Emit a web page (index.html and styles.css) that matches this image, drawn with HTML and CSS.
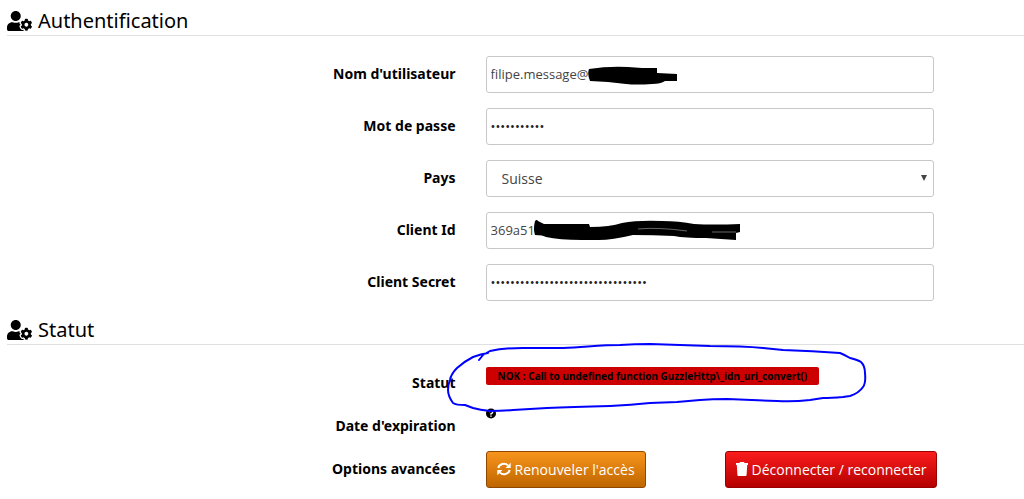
FILE: index.html
```html
<!DOCTYPE html>
<html lang="fr">
<head>
<meta charset="utf-8">
<title>Authentification</title>
<link rel="stylesheet" href="styles.css">
</head>
<body>
<svg class="defs" aria-hidden="true">
  <symbol id="user-cog" viewBox="0 0 640 512"><path d="M610.500 373.300c2.600-14.100 2.600-28.500 0-42.600l25.800-14.900c3-1.700 4.300-5.200 3.300-8.500-6.700-21.600-18.200-41.200-33.200-57.400-2.300-2.500-6-3.100-9-1.400l-25.800 14.900c-10.900-9.300-23.400-16.500-36.900-21.300v-29.800c0-3.400-2.400-6.400-5.700-7.100-22.300-5-45-4.800-66.200 0-3.300.7-5.700 3.700-5.700 7.100v29.800c-13.500 4.800-26 12-36.900 21.300l-25.800-14.900c-2.900-1.700-6.700-1.100-9 1.400-15 16.200-26.500 35.800-33.200 57.400-1 3.300.4 6.800 3.300 8.500l25.800 14.900c-2.600 14.100-2.600 28.500 0 42.600l-25.800 14.900c-3 1.700-4.300 5.200-3.300 8.500 6.700 21.600 18.200 41.100 33.200 57.400 2.300 2.500 6 3.100 9 1.400l25.800-14.900c10.900 9.300 23.400 16.500 36.900 21.300v29.800c0 3.400 2.400 6.400 5.700 7.100 22.300 5 45 4.800 66.200 0 3.300-.7 5.700-3.700 5.700-7.100v-29.800c13.500-4.800 26-12 36.900-21.300l25.800 14.900c2.900 1.700 6.700 1.100 9-1.400 15-16.200 26.500-35.800 33.200-57.400 1-3.300-.4-6.800-3.300-8.500l-25.800-14.900zM496 400.500c-26.800 0-48.500-21.800-48.500-48.500s21.800-48.500 48.500-48.500 48.500 21.800 48.500 48.500-21.700 48.500-48.500 48.500zM224 256c70.700 0 128-57.300 128-128S294.700 0 224 0 96 57.300 96 128s57.300 128 128 128zm201.200 226.500c-2.300-1.200-4.600-2.600-6.800-3.900l-7.900 4.600c-6 3.400-12.800 5.300-19.600 5.300-10.900 0-21.400-4.600-28.900-12.600-18.300-19.800-32.300-43.900-40.200-69.600-5.500-17.700 1.900-36.400 17.900-45.700l7.900-4.600c-.1-2.600-.1-5.200 0-7.800l-7.900-4.600c-16-9.200-23.400-28-17.900-45.700.9-2.900 2.200-5.800 3.200-8.700-3.800-.3-7.500-1.200-11.400-1.200h-16.700c-22.200 10.200-46.900 16-72.900 16s-50.600-5.800-72.900-16h-16.700C60.200 288 0 348.200 0 422.400V464c0 26.500 21.500 48 48 48h352c10.100 0 19.500-3.200 27.200-8.500-1.200-3.800-2-7.700-2-11.800v-9.200z"/></symbol>
</svg>
<main class="page">
  <form class="settings">
    <section class="group">
      <h2 class="title"><svg class="title-icon" aria-hidden="true"><use href="#user-cog"/></svg>Authentification</h2>
      <div class="rows">
        <div class="row">
          <label class="label" for="user">Nom d'utilisateur</label>
          <div class="field">
            <input class="control" id="user" type="text" value="filipe.message@">
            <svg class="mark mark-user" viewBox="0 0 90 20" aria-hidden="true"><path d="M1 3Q20 0 40 1L54 2H69V7L89 8V15H77Q73 18 64 18Q48 19 38 18L20 16L2 15Q-1 8 1 3Z"/></svg>
          </div>
        </div>
        <div class="row">
          <label class="label" for="pass">Mot de passe</label>
          <div class="field"><input class="control secret" id="pass" type="password" value="abcdefghijk"></div>
        </div>
        <div class="row">
          <label class="label" for="country">Pays</label>
          <div class="field">
            <select class="control country" id="country"><option>Suisse</option></select>
            <svg class="arrow" viewBox="0 0 6 6" aria-hidden="true"><path d="M0 0H6L3 6Z"/></svg>
          </div>
        </div>
        <div class="row">
          <label class="label" for="client">Client Id</label>
          <div class="field">
            <input class="control" id="client" type="text" value="369a51">
            <svg class="mark mark-client" viewBox="0 0 208 22" aria-hidden="true"><path d="M1 1Q3-1 4 1L10 4H55L56 7Q76 7 88 3Q104 0 128 1Q145 1 160 4Q179 5 206 4V12L202 13V20L172 18Q151 18 140 16Q119 15 99 15Q78 20 65 20H48Q25 20 12 17Q9 15 1 15Q-1 9 1 1Z"/><path class="gap-line" d="M104 9Q123 7 153 11M178 12L202 12"/></svg>
          </div>
        </div>
        <div class="row">
          <label class="label" for="secret">Client Secret</label>
          <div class="field"><input class="control secret" id="secret" type="password" value="abcdefghijklmnopqrstuvwxyzabcdef"></div>
        </div>
      </div>
    </section>
    <section class="group">
      <h2 class="title"><svg class="title-icon" aria-hidden="true"><use href="#user-cog"/></svg>Statut</h2>
      <div class="rows status-rows">
        <div class="row">
          <span class="label">Statut</span>
          <div class="field">
            <span class="badge">NOK : Call to undefined function GuzzleHttp\_idn_uri_convert()</span>
            <svg class="circle" viewBox="0 0 436 70" aria-hidden="true"><path d="M48 17L52 12L59 8Q72 5 92 5H132C155 4 170 2 189 2Q204 1 219 1L279 3Q312 3 332 5L352 7Q382 8 409 10Q414 12 419 15Q427 17 430 19Q434 23 434 30Q435 40 432 44Q428 50 419 53L412 54Q400 55 392 55L379 57Q362 59 346 58L296 56Q281 56 269 57L246 59L219 60Q200 62 179 63Q140 64 116 65L82 67Q70 68 59 68Q49 67 42 65L34 62Q25 62 22 60Q17 53 17 47Q17 42 19 37Q20 31 26 25Q34 18 42 14Q50 11 57 10"/></svg>
          </div>
        </div>
        <div class="row">
          <span class="label">Date d'expiration</span>
          <div class="field">
            <svg class="help" viewBox="0 0 10 10" role="img" aria-label="Aide"><circle cx="5" cy="5" r="5"/><path d="M3.300 3.700Q3.500 2.300 5 2.300T6.700 3.700Q6.700 4.600 5 5.200V6.200M5 7.100V8.300"/></svg>
          </div>
        </div>
        <div class="row">
          <span class="label">Options avancées</span>
          <div class="actions">
            <button class="button renew" type="button"><svg class="button-icon refresh" viewBox="0 0 14 14" aria-hidden="true"><path d="M1.300 6A5.700 5.300 0 0 1 11 3.400M12.700 8A5.700 5.300 0 0 1 3 10.600"/><path class="solid" d="M13.700 .8V6H8.500ZM.3 13.200V8H5.500Z"/></svg>Renouveler l'accès</button>
            <button class="button reset" type="button"><svg class="button-icon" viewBox="0 0 12 14" aria-hidden="true"><path d="M0 1H3.500L4 0H8L8.500 1H12V3H0ZM.8 3H11.200L10.600 13Q10.500 14 9.500 14H2.500Q1.500 14 1.400 13Z"/></svg>Déconnecter / reconnecter</button>
          </div>
        </div>
      </div>
    </section>
  </form>
</main>
</body>
</html>
```
FILE: styles.css
```css
* {
  box-sizing: border-box;
}

body {
  margin: 0;
  background: #fff;
  color: #000;
  font-family: "Noto Sans", "Open Sans", sans-serif;
  font-size: 14px;
}

.defs {
  position: absolute;
  width: 0;
  height: 0;
}

.page {
  padding: 6px 0 10px 7px;
}

.settings {
  display: flex;
  flex-direction: column;
  gap: 14px;
}

.title {
  display: flex;
  align-items: center;
  gap: 6px;
  margin: 0;
  height: 30px;
  border-bottom: 1px solid #dfdfdf;
  font-size: 20px;
  font-weight: 400;
  line-height: 28px;
}

.title-icon {
  width: 25px;
  height: 20px;
}

.rows {
  display: grid;
  gap: 15px;
  padding-top: 20px;
}

.status-rows {
  gap: 6px;
}

.row {
  display: grid;
  grid-template-columns: 449fr 449fr 60fr;
  column-gap: 30px;
  min-height: 37px;
}

.label {
  font-weight: 700;
  line-height: 36px;
  text-align: right;
}

.field {
  position: relative;
  min-width: 0;
}

.control {
  display: block;
  width: 100%;
  height: 37px;
  padding: 0 4px 2px;
  border: 1px solid #c8c8c8;
  border-radius: 3px;
  background: #fff;
  color: #444;
  font-family: "Open Sans", "Noto Sans", sans-serif;
  font-size: 13px;
}

.secret {
  color: #222;
}

.country {
  appearance: none;
  padding: 0 15px;
  font-size: 14px;
}

.arrow {
  position: absolute;
  top: 15px;
  right: 7px;
  width: 6px;
  height: 6px;
  fill: #444;
  pointer-events: none;
}

.mark {
  position: absolute;
  pointer-events: none;
}

.mark-user {
  top: 10px;
  left: 102px;
  width: 90px;
  height: 20px;
}

.mark-client {
  top: 8px;
  left: 48px;
  width: 208px;
  height: 22px;
  overflow: visible;
}

.gap-line {
  fill: none;
  stroke: #ccc;
  stroke-width: 0.5;
}

.badge {
  display: inline-block;
  margin-top: 2px;
  padding: 0 12px;
  border-radius: 2px;
  background: #c00;
  font-size: 10px;
  font-weight: 700;
  line-height: 18px;
  white-space: nowrap;
  vertical-align: top;
}

.circle {
  position: absolute;
  top: -22px;
  left: -55px;
  width: 436px;
  height: 70px;
  overflow: visible;
  fill: none;
  stroke: #00f;
  stroke-width: 2;
  stroke-linecap: round;
  stroke-linejoin: round;
  z-index: 1;
  pointer-events: none;
}

.help {
  display: block;
  width: 10px;
  height: 11px;
}

.help path {
  fill: none;
  stroke: #fff;
  stroke-width: 1.4;
}

.actions {
  grid-column: 2 / -1;
  display: flex;
  gap: 79px;
}

.button {
  display: flex;
  align-items: center;
  gap: 4px;
  height: 37px;
  padding: 0 10px 1px;
  border: 1px solid;
  border-radius: 3px;
  color: #fff;
  font-family: "Open Sans", "Noto Sans", sans-serif;
  font-size: 14px;
  white-space: nowrap;
}

.renew {
  border-color: #904800;
  background: linear-gradient(#f7941c, #bf6600);
}

.reset {
  border-color: #900;
  background: linear-gradient(#fa1c1c, #b50000);
}

.button-icon {
  width: 12px;
  height: 14px;
  fill: #fff;
}

.refresh {
  width: 14px;
  fill: none;
  stroke: #fff;
  stroke-width: 2;
}

.solid {
  fill: #fff;
  stroke: none;
}
```
